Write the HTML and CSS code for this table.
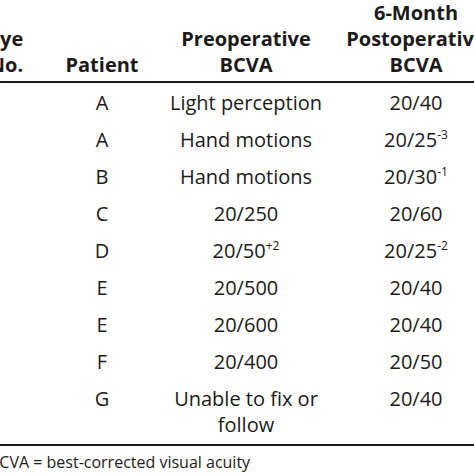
FILE: index.html
```html
<!DOCTYPE html>
<html lang="en">
<head>
<meta charset="utf-8">
<title>BCVA table</title>
<link rel="stylesheet" href="styles.css">
</head>
<body>
<div class="table">
  <div class="row head">
    <div class="cell">Eye<br>No.</div>
    <div class="cell">Patient</div>
    <div class="cell">Preoperative<br>BCVA</div>
    <div class="cell">6-Month<br>Postoperative<br>BCVA</div>
  </div>
  <div class="rows">
    <div class="row"><div class="cell"></div><div class="cell">A</div><div class="cell">Light perception</div><div class="cell">20/40</div></div>
    <div class="row"><div class="cell"></div><div class="cell">A</div><div class="cell">Hand motions</div><div class="cell">20/25<sup>-3</sup></div></div>
    <div class="row"><div class="cell"></div><div class="cell">B</div><div class="cell">Hand motions</div><div class="cell">20/30<sup>-1</sup></div></div>
    <div class="row"><div class="cell"></div><div class="cell">C</div><div class="cell">20/250</div><div class="cell">20/60</div></div>
    <div class="row"><div class="cell"></div><div class="cell">D</div><div class="cell">20/50<sup>+2</sup></div><div class="cell">20/25<sup>-2</sup></div></div>
    <div class="row"><div class="cell"></div><div class="cell">E</div><div class="cell">20/500</div><div class="cell">20/40</div></div>
    <div class="row"><div class="cell"></div><div class="cell">E</div><div class="cell">20/600</div><div class="cell">20/40</div></div>
    <div class="row"><div class="cell"></div><div class="cell">F</div><div class="cell">20/400</div><div class="cell">20/50</div></div>
    <div class="row last"><div class="cell"></div><div class="cell">G</div><div class="cell">Unable to fix or<br>follow</div><div class="cell">20/40</div></div>
  </div>
  <p class="note">BCVA = best-corrected visual acuity</p>
</div>
</body>
</html>
```

FILE: styles.css
```css
html, body {
  margin: 0;
  padding: 0;
  background: #ffffff;
  overflow: hidden;
}

body {
  width: 474px;
  height: 474px;
  font-family: "Open Sans", "Liberation Sans", sans-serif;
  color: #1c1a1b;
}

.table {
  margin-left: -26px;
  width: 532px;
}

.row {
  display: grid;
  grid-template-columns: 64px 128px 160px 180px;
  font-size: 20px;
  line-height: 26px;
  text-align: center;
  font-weight: 500;
}

.cell {
  white-space: nowrap;
}

.head {
  font-weight: 700;
  align-items: end;
  padding-bottom: 3px;
  border-bottom: 2px solid #1c1a1b;
}

.rows {
  border-bottom: 2px solid #1c1a1b;
}

.rows .row {
  padding: 7px 0 4px;
}

.rows .row.last {
  padding-bottom: 6px;
}

sup {
  font-size: 12px;
  line-height: 0;
  vertical-align: 8px;
}

.note {
  margin: 6px 0 0;
  padding-left: 15px;
  font-size: 16px;
  line-height: 20px;
  font-weight: 500;
}
```
